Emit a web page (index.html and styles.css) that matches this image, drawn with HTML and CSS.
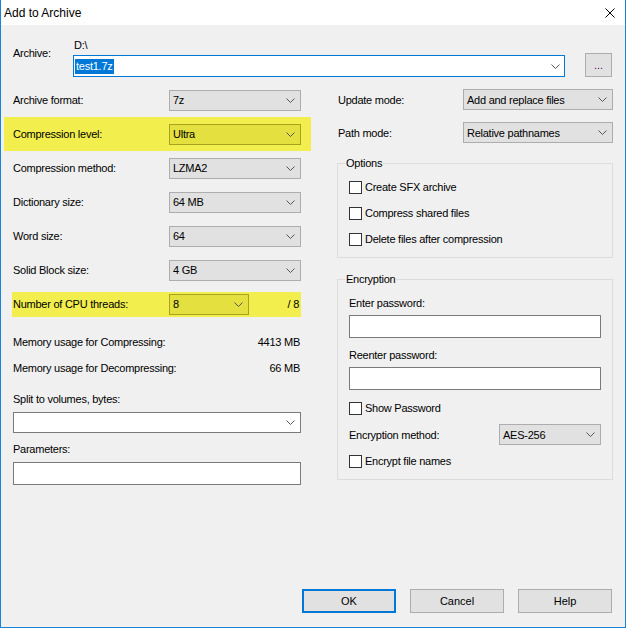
FILE: index.html
```html
<!DOCTYPE html>
<html>
<head>
<meta charset="utf-8">
<title>Add to Archive</title>
<link rel="stylesheet" href="styles.css">
</head>
<body>
<div class="window">
  <div class="titlebar">
    <span class="title">Add to Archive</span>
    <svg class="close" width="10" height="10" viewBox="0 0 10 10"><path d="M0.5 0.5 L9.5 9.5 M9.5 0.5 L0.5 9.5" stroke="#000" stroke-width="1" fill="none"/></svg>
  </div>
  <div class="content">
    <div class="archive-row">
      <span class="archive-lbl">Archive:</span>
      <div class="archive-path">
        <div class="path">D:\</div>
        <div class="combo focused"><span class="seltext">test1.7z</span><svg class="chev" width="9" height="5" viewBox="0 0 9 5"><path d="M0.5 0.5 L4.5 4.5 L8.5 0.5" stroke="#555" fill="none"/></svg></div>
      </div>
      <div class="btn browse">...</div>
    </div>
    <div class="columns">
      <div class="col-left">
        <div class="row"><span class="lbl">Archive format:</span><div class="select w132"><span>7z</span><svg class="chev" width="9" height="5" viewBox="0 0 9 5"><path d="M0.5 0.5 L4.5 4.5 L8.5 0.5" stroke="#555" fill="none"/></svg></div></div>
        <div class="row hl"><span class="lbl">Compression level:</span><div class="select w132 yellow"><span>Ultra</span><svg class="chev" width="9" height="5" viewBox="0 0 9 5"><path d="M0.5 0.5 L4.5 4.5 L8.5 0.5" stroke="#555" fill="none"/></svg></div></div>
        <div class="row"><span class="lbl">Compression method:</span><div class="select w132"><span>LZMA2</span><svg class="chev" width="9" height="5" viewBox="0 0 9 5"><path d="M0.5 0.5 L4.5 4.5 L8.5 0.5" stroke="#555" fill="none"/></svg></div></div>
        <div class="row"><span class="lbl">Dictionary size:</span><div class="select w132"><span>64 MB</span><svg class="chev" width="9" height="5" viewBox="0 0 9 5"><path d="M0.5 0.5 L4.5 4.5 L8.5 0.5" stroke="#555" fill="none"/></svg></div></div>
        <div class="row"><span class="lbl">Word size:</span><div class="select w132"><span>64</span><svg class="chev" width="9" height="5" viewBox="0 0 9 5"><path d="M0.5 0.5 L4.5 4.5 L8.5 0.5" stroke="#555" fill="none"/></svg></div></div>
        <div class="row"><span class="lbl">Solid Block size:</span><div class="select w132"><span>4 GB</span><svg class="chev" width="9" height="5" viewBox="0 0 9 5"><path d="M0.5 0.5 L4.5 4.5 L8.5 0.5" stroke="#555" fill="none"/></svg></div></div>
        <div class="row">
          <div class="hl-inner"><span class="lbl">Number of CPU threads:</span><div class="select w80 yellow"><span>8</span><svg class="chev" width="9" height="5" viewBox="0 0 9 5"><path d="M0.5 0.5 L4.5 4.5 L8.5 0.5" stroke="#555" fill="none"/></svg></div><span class="total">/ 8</span></div>
        </div>
        <div class="mem first"><span>Memory usage for Compressing:</span><span>4413 MB</span></div>
        <div class="mem"><span>Memory usage for Decompressing:</span><span>66 MB</span></div>
        <div class="caption split-cap">Split to volumes, bytes:</div>
        <div class="combo plain"><span></span><svg class="chev" width="9" height="5" viewBox="0 0 9 5"><path d="M0.5 0.5 L4.5 4.5 L8.5 0.5" stroke="#555" fill="none"/></svg></div>
        <div class="caption params-cap">Parameters:</div>
        <div class="textbox params"></div>
      </div>
      <div class="col-right">
        <div class="rrow"><span class="rlbl">Update mode:</span><div class="select w150"><span>Add and replace files</span><svg class="chev" width="9" height="5" viewBox="0 0 9 5"><path d="M0.5 0.5 L4.5 4.5 L8.5 0.5" stroke="#555" fill="none"/></svg></div></div>
        <div class="rrow"><span class="rlbl">Path mode:</span><div class="select w150"><span>Relative pathnames</span><svg class="chev" width="9" height="5" viewBox="0 0 9 5"><path d="M0.5 0.5 L4.5 4.5 L8.5 0.5" stroke="#555" fill="none"/></svg></div></div>
        <fieldset class="group options">
          <legend>Options</legend>
          <div class="check"><span class="box"></span><span>Create SFX archive</span></div>
          <div class="check"><span class="box"></span><span>Compress shared files</span></div>
          <div class="check"><span class="box"></span><span>Delete files after compression</span></div>
        </fieldset>
        <fieldset class="group encryption">
          <legend>Encryption</legend>
          <div class="caption">Enter password:</div>
          <div class="textbox pw"></div>
          <div class="caption pw-cap2">Reenter password:</div>
          <div class="textbox pw"></div>
          <div class="check show"><span class="box"></span><span>Show Password</span></div>
          <div class="encrow"><span class="elbl">Encryption method:</span><div class="select w102"><span>AES-256</span><svg class="chev" width="9" height="5" viewBox="0 0 9 5"><path d="M0.5 0.5 L4.5 4.5 L8.5 0.5" stroke="#555" fill="none"/></svg></div></div>
          <div class="check encnames"><span class="box"></span><span>Encrypt file names</span></div>
        </fieldset>
      </div>
    </div>
  </div>
  <div class="footer">
    <div class="btn action default">OK</div>
    <div class="btn action">Cancel</div>
    <div class="btn action">Help</div>
  </div>
</div>
</body>
</html>
```

FILE: styles.css
```css
* { box-sizing: border-box; margin: 0; padding: 0; }
html, body { width: 626px; height: 628px; overflow: hidden; background: #f0f0f0; }
body {
  font-family: "Liberation Sans", Arial, sans-serif;
  font-size: 11px;
  letter-spacing: -0.25px;
  color: #000;
}
.window {
  width: 626px;
  height: 628px;
  display: flex;
  flex-direction: column;
  border: 1px solid #1883d7;
  border-top: none;
  background: #f0f0f0;
}
.titlebar {
  height: 25px;
  flex: none;
  background: #fff;
  display: flex;
  align-items: center;
  justify-content: space-between;
  padding: 0 10px 0 3px;
  font-size: 12px;
  letter-spacing: 0;
}
.close { display: block; margin-top: 1px; }
.content { flex: 1; padding-left: 12px; }

/* archive row */
.archive-row { display: flex; align-items: flex-start; height: 58px; padding-top: 13px; }
.archive-lbl { width: 60px; margin-top: 8px; line-height: 14px; height: 14px; }
.archive-path { width: 492px; }
.path { line-height: 14px; height: 14px; padding-left: 1px; }
.combo {
  display: flex;
  align-items: center;
  justify-content: space-between;
  background: #fff;
  border: 1px solid #7a7a7a;
}
.combo.focused { margin-top: 3px; height: 22px; border-color: #0078d7; padding: 0 4px 0 1px; }
.seltext { background: #0078d7; color: #fff; line-height: 15px; padding: 0 1px; }
.btn {
  display: flex;
  align-items: center;
  justify-content: center;
  background: #e1e1e1;
  border: 1px solid #adadad;
}
.browse { width: 27px; height: 24px; margin: 15px 0 0 20px; color: #5a005a; letter-spacing: 0; }

/* columns */
.columns { display: flex; }
.col-left { width: 288px; }
.col-right { width: 276px; margin-left: 36px; }

.row { display: flex; align-items: center; height: 34px; }
.lbl { width: 156px; flex: none; }
.row.hl { margin: 0 -10px 0 -9px; padding: 0 10px 0 9px; background: #f1ee4e; }
.hl-inner {
  display: flex;
  align-items: center;
  height: 25px;
  width: 291px;
  margin-left: -1px;
  padding: 0 2px 0 1px;
  background: #f1ee4e;
}
.total { flex: 1; text-align: right; }

.select {
  display: flex;
  align-items: center;
  justify-content: space-between;
  height: 21px;
  background: #e1e1e1;
  border: 1px solid #adadad;
  padding: 0 5px 0 3px;
  flex: none;
}
.select.yellow { background: #e3e03f; border-color: #a6a31f; }
.w132 { width: 132px; }
.w80 { width: 80px; }
.w150 { width: 150px; }
.w102 { width: 102px; }
.chev { display: block; flex: none; }

.mem { display: flex; justify-content: space-between; height: 26px; align-items: center; padding-right: 1px; }
.mem.first { margin-top: 8px; }
.caption { line-height: 14px; height: 14px; }
.split-cap { margin-top: 11px; }
.combo.plain { margin-top: 6px; height: 21px; padding: 0 5px 0 3px; border-color: #7a7a7a; }
.params-cap { margin-top: 9px; }
.textbox { background: #fff; border: 1px solid #7a7a7a; }
.params { margin-top: 6px; height: 23px; }

/* right column */
.rrow { display: flex; align-items: center; height: 33px; }
.rlbl { width: 126px; padding-left: 1px; flex: none; }

.group {
  border: 1px solid #dcdcdc;
  padding: 0 11px 0 11px;
  min-width: 0;
}
.group legend {
  line-height: 14px;
  height: 14px;
  margin-left: -4px;
  padding: 0 1px;
}
.options { margin-top: 7px; padding-top: 4px; padding-bottom: 5px; }
.encryption { margin-top: 14px; padding-top: 10px; padding-bottom: 5px; }

.check { display: flex; align-items: center; height: 26px; }
.box {
  width: 13px;
  height: 13px;
  background: #fff;
  border: 1px solid #333;
  margin-right: 3px;
  flex: none;
}
.pw { margin-top: 5px; height: 23px; width: 252px; }
.pw-cap2 { margin-top: 10px; }
.check.show { margin-top: 5px; }
.encrow { display: flex; align-items: center; height: 27px; }
.elbl { width: 150px; flex: none; }

/* footer */
.footer {
  display: flex;
  justify-content: flex-end;
  gap: 14px;
  padding: 0 13px 14px 0;
  flex: none;
}
.action { width: 94px; height: 24px; letter-spacing: 0; }
.action.default { border: 2px solid #0078d7; }
```
